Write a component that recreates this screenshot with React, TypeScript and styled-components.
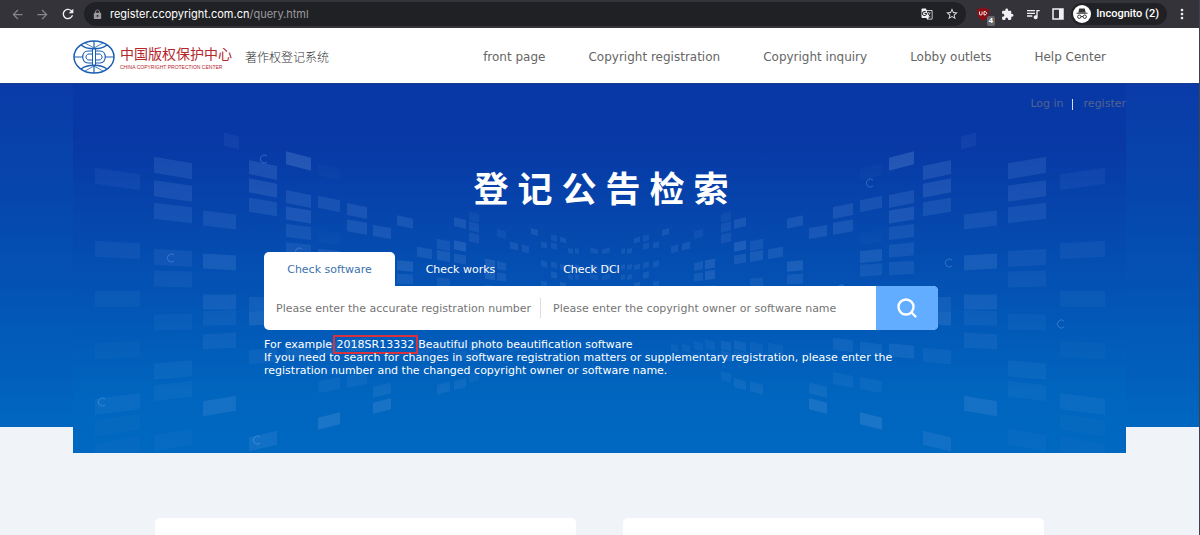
import React from 'react';
import styled, { createGlobalStyle } from 'styled-components';
import {
  MdArrowBack, MdArrowForward, MdRefresh, MdLock, MdGTranslate, MdStarBorder,
  MdExtension, MdQueueMusic, MdMoreVert,
} from 'react-icons/md';

const GlobalStyle = createGlobalStyle`
  * { box-sizing: border-box; }
  body {
    margin: 0;
    background: #f0f4f8;
    font-family: 'DejaVu Sans', 'Noto Sans CJK SC', sans-serif;
  }
  a { text-decoration: none; color: inherit; }
  button, input { font: inherit; border: 0; padding: 0; background: none; color: inherit; }
`;

const Page = styled.div`
  min-height: 100vh;
  display: flex;
  flex-direction: column;
  border-right: 1px solid #3a4350;
`;

/* ---- browser bar ---- */
const Toolbar = styled.div`
  display: flex;
  align-items: center;
  height: 28px;
  padding: 0 8px 0 5px;
  background: #35333a;
  color: #f1f1f3;
`;
const ToolButton = styled.button<{ $dim?: boolean; $width?: number }>`
  display: grid;
  place-items: center;
  width: ${(p) => p.$width ?? 25}px;
  height: 24px;
  color: ${(p) => (p.$dim ? '#87858c' : '#f1f1f3')};
`;
const NavButtons = styled.div`
  display: flex;
`;
const AddressBar = styled.div`
  display: flex;
  align-items: center;
  flex: 1;
  height: 24px;
  margin-left: 4px;
  padding: 0 2px 0 8px;
  border-radius: 12px;
  background: #202124;
  color: #9a9a9e;
`;
const Address = styled.div`
  flex: 1;
  margin-left: 7px;
  font: 11px/16px Inter, sans-serif;
`;
const Host = styled.span`
  color: #ffffff;
`;
const Extensions = styled.div`
  display: flex;
  align-items: center;
  margin-left: 4px;
`;
const ShieldButton = styled(ToolButton)`
  position: relative;
`;
const ShieldCount = styled.span`
  position: absolute;
  right: 0;
  bottom: 0;
  padding: 0 2px;
  border-radius: 2px;
  background: #66666a;
  color: #ffffff;
  font: bold 8px/10px Roboto, sans-serif;
`;
const Incognito = styled.button`
  display: flex;
  align-items: center;
  gap: 5px;
  height: 22px;
  margin: 0 6px 0 1px;
  padding: 0 8px 0 2px;
  border-radius: 11px;
  background: #202124;
  color: #ffffff;
  font: 500 11px/16px Roboto, sans-serif;
  white-space: nowrap;
`;

/* ---- site header ---- */
const Header = styled.header`
  height: 56px;
  padding: 0 73px;
  background: #ffffff;
  border-bottom: 1px solid #173a8f;
`;
const HeaderInner = styled.div`
  display: flex;
  align-items: center;
  justify-content: space-between;
  height: 100%;
  padding-top: 2px;
`;
const Brand = styled.a`
  display: flex;
  align-items: center;
`;
const BrandName = styled.div`
  display: flex;
  flex-direction: column;
  margin-left: 5px;
  color: #b5262c;
`;
const BrandChinese = styled.span`
  font: 14px/20px 'Noto Sans CJK SC', sans-serif;
`;
const BrandEnglish = styled.span`
  font: 5px/8px 'Liberation Sans', sans-serif;
  white-space: nowrap;
`;
const SystemName = styled.span`
  margin-left: 13px;
  color: #333333;
  font: 300 12px/20px 'Noto Sans CJK SC', sans-serif;
`;
const MainNav = styled.nav`
  display: flex;
  gap: 43px;
  padding-right: 20px;
  color: #666666;
  font-size: 12px;
  line-height: 20px;
  white-space: nowrap;
`;

/* ---- hero ---- */
const HeroBand = styled.section`
  padding: 0 73px;
  background: linear-gradient(#0a3ba8 0, #0646ac 110px, #0067c0 343px, transparent 343px);
`;
const HeroPanel = styled.div`
  position: relative;
  height: 369px;
  background: linear-gradient(#0838a5 0, #0838a5 55px, #0065be 310px, #0068c1);
`;
const Tiles = styled.svg`
  position: absolute;
  inset: 0;
  width: 100%;
  height: 100%;
`;
const HeroContent = styled.div`
  position: relative;
  display: flex;
  flex-direction: column;
  align-items: center;
  padding-left: 3px;
`;
const Account = styled.div`
  display: flex;
  align-self: flex-end;
  align-items: center;
  gap: 8px;
  margin-top: 12px;
  color: #536391;
  font-size: 11px;
  line-height: 16px;
`;
const AccountDivider = styled.span`
  width: 1px;
  height: 11px;
  margin-right: 3px;
  background: #d5dff0;
`;
const Title = styled.h1`
  display: flex;
  gap: 9px;
  margin: 51px 0 0;
  color: #ffffff;
  font: bold 35px/48px 'Noto Sans CJK SC', sans-serif;
`;
const SearchBox = styled.div`
  width: 674px;
  max-width: 100%;
  margin-top: 41px;
  font-size: 11px;
`;
const Tabs = styled.div`
  display: flex;
`;
const Tab = styled.button<{ $active?: boolean }>`
  width: 131px;
  height: 34px;
  border-radius: 5px 5px 0 0;
  background: ${(p) => (p.$active ? '#ffffff' : 'transparent')};
  color: ${(p) => (p.$active ? '#3a72ae' : '#ffffff')};
`;
const Fields = styled.form`
  display: flex;
  align-items: center;
  height: 44px;
  border-radius: 0 5px 5px 5px;
  background: #ffffff;
  overflow: hidden;
`;
const Field = styled.input<{ $grow?: boolean }>`
  width: 276px;
  flex: ${(p) => (p.$grow ? '1' : 'none')};
  height: 20px;
  padding: 0 4px 0 12px;
  outline: 0;
  color: #333333;
  & + & { border-left: 1px solid #dddddd; }
  &::placeholder { color: #757575; opacity: 1; }
`;
const SearchButton = styled.button`
  display: grid;
  place-items: center;
  width: 62px;
  height: 100%;
  background: #62adff;
  color: #ffffff;
`;
const Hint = styled.p`
  width: 640px;
  max-width: 100%;
  margin: 8px 0 0;
  color: #ffffff;
  line-height: 13px;
`;
const Marked = styled.mark`
  margin: 0 0 0 -3px;
  padding: 1px 2px;
  border: 2px solid #d8323f;
  background: none;
  color: inherit;
`;

/* ---- cards under the hero ---- */
const Cards = styled.section`
  display: grid;
  grid-template-columns: 1fr 1fr;
  gap: 47px;
  flex: 1;
  min-height: 82px;
  padding: 65px 155px 0;
`;
const Card = styled.article`
  border-radius: 5px 5px 0 0;
  background: #ffffff;
`;

/* Left half of the tile wall: [left, width, height, [centre y, opacity]...].
   The right half mirrors it. */
type Column = [number, number, number, [number, number][]];
const columns: Column[] = [
  [95, 45, 16, [[179, 0.07], [250, 0.08], [299, 0.06], [350, 0.04], [404, 0.08], [425, 0.04], [448, 0.04]]],
  [154, 38, 16, [[168, 0.13], [191, 0.13], [213, 0.12], [258, 0.09], [279, 0.08], [322, 0.06], [370, 0.07], [391, 0.06], [440, 0.05]]],
  [203, 33, 15, [[220, 0.12], [262, 0.14], [302, 0.12], [318, 0.08], [341, 0.09], [406, 0.14]]],
  [224, 15, 13, [[141, 0.08]]],
  [249, 28, 14, [[170, 0.16], [188, 0.16], [207, 0.13], [304, 0.1], [318, 0.15], [356, 0.08], [441, 0.12]]],
  [286, 25, 13, [[161, 0.22], [199, 0.14], [215, 0.16], [232, 0.12], [250, 0.12], [268, 0.11], [351, 0.12]]],
  [318, 22, 12, [[172, 0.03], [204, 0.13], [238, 0.03], [256, 0.15], [270, 0.11], [349, 0.1], [385, 0.07], [421, 0.18]]],
  [347, 20, 12, [[211, 0.15], [227, 0.14], [345, 0.1], [380, 0.08]]],
  [373, 18, 11, [[232, 0.14], [390, 0.1], [406, 0.17]]],
  [397, 16, 10, [[222, 0.14], [266, 0.17], [279, 0.12]]],
  [417, 15, 10, [[253, 0.13], [349, 0.08]]],
  [437, 13, 10, [[245, 0.12], [256, 0.15], [283, 0.1], [348, 0.08], [388, 0.1]]],
  [454, 12, 9, [[223, 0.15], [246, 0.18], [259, 0.13], [346, 0.1], [356, 0.08], [384, 0.1]]],
  [469, 10, 9, [[217, 0.08], [227, 0.11], [238, 0.11], [346, 0.1], [356, 0.1], [377, 0.08]]],
  [485, 10, 9, [[264, 0.16], [275, 0.16], [290, 0.16], [300, 0.18], [345, 0.08]]],
  [497, 9, 8, [[234, 0.08], [266, 0.13], [277, 0.12], [290, 0.16], [300, 0.18], [346, 0.08]]],
  [510, 8, 7, [[246, 0.13], [290, 0.14], [300, 0.14], [348, 0.08]]],
  [522, 7, 7, [[249, 0.12], [290, 0.13], [300, 0.14], [348, 0.08]]],
  [531, 7, 6, [[232, 0.13]]],
  [541, 6, 6, [[245, 0.12], [264, 0.12], [284, 0.12]]],
  [551, 6, 6, [[238, 0.1], [246, 0.11], [265, 0.11], [275, 0.13]]],
  [560, 6, 5, [[240, 0.12], [267, 0.12], [285, 0.13]]],
  [568, 5, 5, [[251, 0.12], [267, 0.12], [277, 0.1]]],
  [575, 4, 5, [[251, 0.12], [267, 0.12], [277, 0.1]]],
  [590, 8, 5, [[251, 0.1], [267, 0.1], [277, 0.09]]],
];
const marks: [number, number][] = [
  [264, 159], [171, 258], [299, 252], [102, 402], [257, 440],
  [870, 183], [949, 263], [841, 289], [1061, 324],
];

const HalfWall = () => (
  <g>
    {columns.map(([x, w, h, rows]) =>
      rows.map(([y, o]) => {
        const drop = Math.max(-0.26, Math.min(0.26, ((300 - y) * 0.6) / (600 - x))) * w;
        const t = y - h / 2 - drop / 2;
        return (
          <path
            key={`${x}-${y}`}
            d={`M${x} ${t}l${w} ${drop}v${h}l${-w} ${-drop}z`}
            fill="#8fb6ee"
            fillOpacity={o}
          />
        );
      }),
    )}
  </g>
);

const Emblem = () => (
  <svg width="42" height="34" viewBox="0 0 42 34" fill="none" stroke="#1b5fb4" aria-hidden="true">
    <ellipse cx="21" cy="17" rx="20" ry="16" strokeWidth="1.5" />
    <path d="M21 1v8M21 25v8M1 17h9M32 17h9" strokeWidth="1.2" />
    <path d="M8 5c6 5 20 5 26 0M8 29c6-5 20-5 26 0" strokeWidth="1.3" />
    <path d="M12 3l9 5 9-5M12 31l9-5 9 5" strokeWidth=".8" />
    <path d="M19 11h-4c-7 0-7 12 0 12h4M23 23h4c7 0 7-12 0-12h-4" strokeWidth="1.2" />
    <path d="M19 14h-3c-4 0-4 6 0 6h3M23 14h3c4 0 4 6 0 6h-3M19.500 9v16M22.500 9v16" strokeWidth="1" />
  </svg>
);

export default function App() {
  return (
    <>
      <GlobalStyle />
      <Page>
        <Toolbar>
          <NavButtons>
            <ToolButton $dim aria-label="Back"><MdArrowBack size={15} /></ToolButton>
            <ToolButton $dim aria-label="Forward"><MdArrowForward size={15} /></ToolButton>
            <ToolButton aria-label="Reload"><MdRefresh size={16} /></ToolButton>
          </NavButtons>
          <AddressBar>
            <MdLock size={11} />
            <Address><Host>register.ccopyright.com.cn</Host>/query.html</Address>
            <ToolButton aria-label="Translate"><MdGTranslate size={12} /></ToolButton>
            <ToolButton aria-label="Bookmark"><MdStarBorder size={14} color="#dddddf" /></ToolButton>
          </AddressBar>
          <Extensions>
            <ShieldButton aria-label="Blocker">
              <svg width="14" height="14" viewBox="0 0 14 14">
                <path d="M7 0C5 1.500 3 2 1 2c0 6 1 9 6 12 5-3 6-6 6-12-2 0-4-.5-6-2z" fill="#8b0f17" />
                <path d="M3.500 4.500v2.500q0 1 1.300 1t1.300-1V4.500M8 4.500V8c3.500 0 3.500-3.500 0-3.500z" fill="none" stroke="#fff" strokeWidth=".9" />
              </svg>
              <ShieldCount>4</ShieldCount>
            </ShieldButton>
            <ToolButton aria-label="Extensions"><MdExtension size={13} /></ToolButton>
            <ToolButton aria-label="Media"><MdQueueMusic size={16} /></ToolButton>
            <ToolButton aria-label="Side panel">
              <svg width="12" height="12" viewBox="0 0 12 12">
                <path d="M1 1h10v10H1z" fill="none" stroke="currentColor" strokeWidth="1.500" />
                <path d="M7 1h4v10H7z" fill="currentColor" />
              </svg>
            </ToolButton>
            <Incognito>
              <svg width="18" height="18" viewBox="0 0 18 18">
                <circle cx="9" cy="9" r="9" fill="#fff" />
                <path d="M6.300 3.500h5.400l1 4H5.300zM3.500 7.700h11v1h-11z" fill="#333" />
                <circle cx="6.300" cy="11.700" r="1.700" fill="none" stroke="#333" />
                <circle cx="11.700" cy="11.700" r="1.700" fill="none" stroke="#333" />
                <path d="M8 11.500h2" stroke="#333" />
              </svg>
              Incognito (2)
            </Incognito>
            <ToolButton $width={18} aria-label="Menu"><MdMoreVert size={16} /></ToolButton>
          </Extensions>
        </Toolbar>

        <Header>
          <HeaderInner>
            <Brand href="#">
              <Emblem />
              <BrandName>
                <BrandChinese>中国版权保护中心</BrandChinese>
                <BrandEnglish>CHINA COPYRIGHT PROTECTION CENTER</BrandEnglish>
              </BrandName>
              <SystemName>著作权登记系统</SystemName>
            </Brand>
            <MainNav>
              <a href="#">front page</a>
              <a href="#">Copyright registration</a>
              <a href="#">Copyright inquiry</a>
              <a href="#">Lobby outlets</a>
              <a href="#">Help Center</a>
            </MainNav>
          </HeaderInner>
        </Header>

        <HeroBand>
          <HeroPanel>
            <Tiles viewBox="73 84 1053 369" preserveAspectRatio="none" aria-hidden="true">
              <HalfWall />
              <g transform="translate(1200 0) scale(-1 1)"><HalfWall /></g>
              {marks.map(([x, y]) => (
                <path key={x} d={`M${x + 3} ${y - 3}a4 4 0 1 0 0 6`} fill="none" stroke="#9cc4f5" strokeOpacity="0.3" />
              ))}
            </Tiles>
            <HeroContent>
              <Account>
                <a href="#">Log in</a>
                <AccountDivider />
                <a href="#">register</a>
              </Account>
              <Title>
                {Array.from('登记公告检索').map((c) => <span key={c}>{c}</span>)}
              </Title>
              <SearchBox>
                <Tabs>
                  <Tab $active>Check software</Tab>
                  <Tab>Check works</Tab>
                  <Tab>Check DCI</Tab>
                </Tabs>
                <Fields>
                  <Field aria-label="Registration number" placeholder="Please enter the accurate registration number" />
                  <Field $grow aria-label="Owner or software name" placeholder="Please enter the copyright owner or software name" />
                  <SearchButton type="button" aria-label="Search">
                    <svg width="22" height="22" viewBox="0 0 22 22" fill="none" stroke="currentColor" strokeWidth="2.400" strokeLinecap="round">
                      <circle cx="10" cy="10" r="7.500" />
                      <path d="M15.500 15.500l4 4" />
                    </svg>
                  </SearchButton>
                </Fields>
                <Hint>
                  For example <Marked>2018SR13332</Marked>Beautiful photo beautification software
                  <br />
                  If you need to search for changes in software registration matters or supplementary registration, please enter the registration number and the changed copyright owner or software name.
                </Hint>
              </SearchBox>
            </HeroContent>
          </HeroPanel>
        </HeroBand>

        <Cards>
          <Card />
          <Card />
        </Cards>
      </Page>
    </>
  );
}
